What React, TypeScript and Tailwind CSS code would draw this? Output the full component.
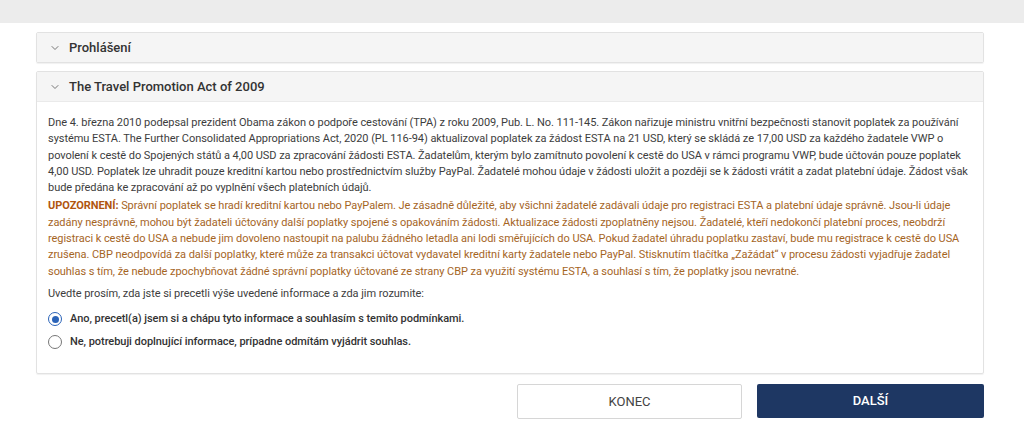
import { ChevronDown } from 'lucide-react'

function PanelHeader({ title }: { title: string }) {
  return (
    <div className="flex items-center gap-[8px] h-[29px] pl-[12px] bg-[#f5f5f5] text-[#333] text-[13px] font-medium">
      <ChevronDown className="w-[12px] h-[12px] text-[#777]" strokeWidth={2} />
      <span>{title}</span>
    </div>
  )
}

function Radio({ checked, label }: { checked?: boolean; label: string }) {
  return (
    <label className="flex items-center gap-[8px] text-[11px] font-medium text-[#333]">
      <span
        className={
          checked
            ? 'w-[14px] h-[14px] rounded-full border-[1.5px] border-[#2a63b8] flex items-center justify-center'
            : 'w-[14px] h-[14px] rounded-full border-[1.5px] border-[#777]'
        }
      >
        {checked && <span className="w-[7px] h-[7px] rounded-full bg-[#2a63b8]" />}
      </span>
      {label}
    </label>
  )
}

export default function App() {
  return (
    <div className="w-[1024px] h-[428px] bg-white font-['Roboto','Liberation_Sans',sans-serif] overflow-hidden">
      <div className="h-[23px] bg-[#ececec]" />
      <div className="pl-[36px] pr-[40px] pt-[9px] flex flex-col">
        <div className="border border-[#e2e2e2] rounded-[2px] shadow-[0_1px_1px_rgba(0,0,0,0.06)]">
          <PanelHeader title="Prohlášení" />
        </div>

        <div className="mt-[8px] border border-[#e2e2e2] rounded-[2px] shadow-[0_1px_1px_rgba(0,0,0,0.06)]">
          <div className="border-b border-[#eaeaea]">
            <PanelHeader title="The Travel Promotion Act of 2009" />
          </div>
          <div className="px-[11px] pt-[13px] pb-[23px] text-[11px] leading-[16.3px] tracking-[-0.05px] text-[#3d3d3d]">
            <p>
              Dne 4. března 2010 podepsal prezident Obama zákon o podpoře cestování (TPA) z roku 2009, Pub. L. No. 111-145. Zákon nařizuje ministru vnitřní bezpečnosti stanovit poplatek za používání systému ESTA. The Further Consolidated Appropriations Act, 2020 (PL 116-94) aktualizoval poplatek za žádost ESTA na 21 USD, který se skládá ze 17,00 USD za každého žadatele VWP o povolení k cestě do Spojených států a 4,00 USD za zpracování žádosti ESTA. Žadatelům, kterým bylo zamítnuto povolení k cestě do USA v rámci programu VWP, bude účtován pouze poplatek 4,00 USD. Poplatek lze uhradit pouze kreditní kartou nebo prostřednictvím služby PayPal. Žadatelé mohou údaje v žádosti uložit a později se k žádosti vrátit a zadat platební údaje. Žádost však bude předána ke zpracování až po vyplnění všech platebních údajů.
            </p>
            <p className="mt-[2px] text-[#a5651f]">
              <span className="font-bold text-[#b0560f]">UPOZORNENÍ:</span> Správní poplatek se hradí kreditní kartou nebo PayPalem. Je zásadně důležité, aby všichni žadatelé zadávali údaje pro registraci ESTA a platební údaje správně. Jsou-li údaje zadány nesprávně, mohou být žadateli účtovány další poplatky spojené s opakováním žádosti. Aktualizace žádosti zpoplatněny nejsou. Žadatelé, kteří nedokončí platební proces, neobdrží registraci k cestě do USA a nebude jim dovoleno nastoupit na palubu žádného letadla ani lodi směřujících do USA. Pokud žadatel úhradu poplatku zastaví, bude mu registrace k cestě do USA zrušena. CBP neodpovídá za další poplatky, které může za transakci účtovat vydavatel kreditní karty žadatele nebo PayPal. Stisknutím tlačítka „Zažádat“ v procesu žádosti vyjadřuje žadatel souhlas s tím, že nebude zpochybňovat žádné správní poplatky účtované ze strany CBP za využití systému ESTA, a souhlasí s tím, že poplatky jsou nevratné.
            </p>
            <p className="mt-[6px]">Uvedte prosím, zda jste si precetli výše uvedené informace a zda jim rozumite:</p>
            <div className="mt-[9px] flex flex-col gap-[6px]">
              <Radio checked label="Ano, precetl(a) jsem si a chápu tyto informace a souhlasím s temito podmínkami." />
              <Radio label="Ne, potrebuji doplnující informace, prípadne odmítám vyjádrit souhlas." />
            </div>
          </div>
        </div>

        <div className="mt-[10px] flex justify-end gap-[15px]">
          <button className="w-[225px] h-[35px] border border-[#d6d6d6] bg-white text-[#444] text-[13px] rounded-[2px]">
            KONEC
          </button>
          <button className="w-[227px] h-[34px] bg-[#1e3763] text-white text-[13px] font-medium rounded-[2px]">
            DALŠÍ
          </button>
        </div>
      </div>
    </div>
  )
}
